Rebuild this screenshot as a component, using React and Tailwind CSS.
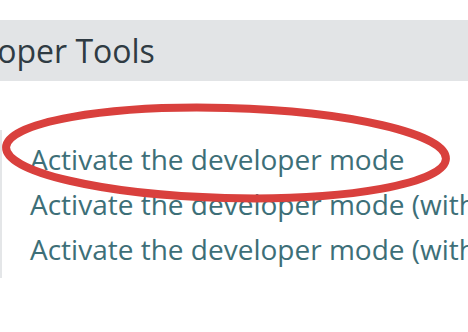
export default function App() {
  const links = [
    "Activate the developer mode",
    "Activate the developer mode (with assets)",
    "Activate the developer mode (with tests assets)",
  ];

  return (
    <div
      className="relative h-[332px] w-[468px] overflow-hidden bg-white"
      style={{ fontFamily: "'Open Sans', 'Noto Sans', sans-serif" }}
    >
      <div className="mt-5 flex h-[61px] items-center bg-[#e2e4e6]">
        <h2 className="ml-[-86px] whitespace-nowrap text-[32px] leading-none text-[#2f3b43]">
          Developer Tools
        </h2>
      </div>

      <div className="mt-[49px] flex flex-col border-l-2 border-[#e4e6e8] pl-7 pt-[7px] pb-[6px]">
        {links.map((label) => (
          <a
            key={label}
            href="#"
            className="whitespace-nowrap text-[28px] leading-[45px] text-[#3d6f78]"
          >
            {label}
          </a>
        ))}
      </div>

      <svg
        className="pointer-events-none absolute left-0 top-0"
        width="468"
        height="332"
        viewBox="0 0 468 332"
      >
        <ellipse
          cx="226"
          cy="153"
          rx="220"
          ry="45"
          transform="rotate(1.5 226 153)"
          fill="none"
          stroke="#d9403d"
          strokeWidth="8"
        />
      </svg>
    </div>
  );
}
